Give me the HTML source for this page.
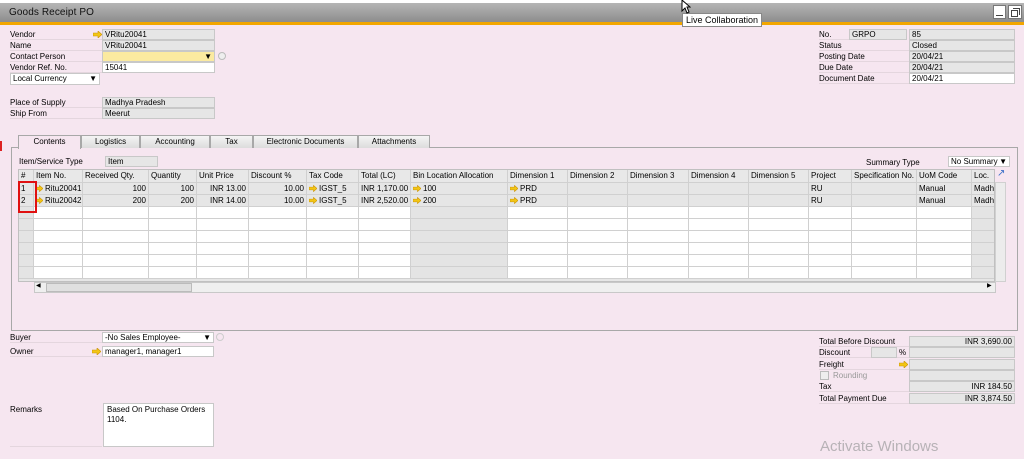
<!DOCTYPE html>
<html><head><meta charset="utf-8"><style>
*{margin:0;padding:0;box-sizing:border-box}
body{width:1024px;height:459px;overflow:hidden;background:#f6e6f0;font-family:Tahoma,"Liberation Sans",sans-serif;font-size:8px;color:#000;position:relative}
.a{position:absolute;white-space:nowrap;line-height:11px}
.lb{position:absolute;height:11px;line-height:11px;border-bottom:1px solid #e4d6de;white-space:nowrap}
.f{position:absolute;height:11px;line-height:10px;background:#e6e6e6;border:1px solid #c8c8c8;padding-left:2px;white-space:nowrap;overflow:hidden}
.w{background:#fff}
.y{background:#fbeaa0}
.arr{position:absolute;width:9px;height:7px}
.cell{position:absolute;border-right:1px solid #d0d0d0;border-bottom:1px solid #d0d0d0;overflow:hidden;white-space:nowrap;line-height:11px;padding:0 2px}
.tab{position:absolute;top:135px;height:13px;border:1px solid #a8a8a8;border-bottom:none;background:linear-gradient(#f4f4f4,#dcdcdc);text-align:center;line-height:12px}
</style></head><body>
<div style="position:absolute;left:0;top:0;width:1024px;height:3px;background:#fff"></div>
<div style="position:absolute;left:0;top:3px;width:1024px;height:19px;background:linear-gradient(#b5b5b5,#8d8d8d)"></div>
<div style="position:absolute;left:0;top:22px;width:1024px;height:3px;background:#f2a600"></div>
<div class="a" style="left:9px;top:7px;font-size:10px;color:#111;letter-spacing:0.1px">Goods Receipt PO</div>
<div style="position:absolute;left:993px;top:5px;width:13px;height:14px;background:#fff;border:1px solid #777"><div style="position:absolute;left:2px;top:9px;width:7px;height:1px;background:#444"></div></div>
<div style="position:absolute;left:1008px;top:5px;width:14px;height:14px;background:#fff;border:1px solid #777"><div style="position:absolute;left:2px;top:4px;width:7px;height:7px;border:1px solid #444"></div><div style="position:absolute;left:4px;top:2px;width:7px;height:7px;border-top:1px solid #444;border-right:1px solid #444"></div></div>
<div class="a" style="left:682px;top:13px;height:14px;background:#fff;border:1px solid #888;padding:1px 3px;font-size:9px;line-height:11px;font-family:'Liberation Sans',sans-serif">Live Collaboration</div>
<svg style="position:absolute;left:681px;top:0" width="10" height="14"><path d="M1 0 L1 11 L4 8 L6 13 L8 12 L6 7 L9 7 Z" fill="#fff" stroke="#000" stroke-width="1"/></svg>
<div style="position:absolute;left:0;top:141px;width:2px;height:10px;background:#d22"></div>

<div class="lb" style="left:10px;top:29px;width:92px">Vendor</div>
<div class="lb" style="left:10px;top:40px;width:92px">Name</div>
<div class="lb" style="left:10px;top:51px;width:92px">Contact Person</div>
<div class="lb" style="left:10px;top:62px;width:92px">Vendor Ref. No.</div>
<svg class="arr" style="left:93px;top:31px" viewBox="0 0 9 7"><path d="M0 2H5V0L9 3.5 5 7V5H0Z" fill="#f3c614" stroke="#c9930a" stroke-width=".6"/></svg>
<div class="f" style="left:102px;top:29px;width:113px">VRitu20041</div>
<div class="f" style="left:102px;top:40px;width:113px">VRitu20041</div>
<div class="f y" style="left:102px;top:51px;width:113px"><span style="position:absolute;right:2px;top:0">▼</span></div>
<div style="position:absolute;left:218px;top:52px;width:8px;height:8px;border:1px solid #bbb;border-radius:50%;background:#eee"></div>
<div class="f w" style="left:102px;top:62px;width:113px">15041</div>
<div class="f w" style="left:10px;top:73px;width:90px;height:12px">Local Currency<span style="position:absolute;right:2px;top:0">▼</span></div>
<div class="lb" style="left:10px;top:97px;width:92px">Place of Supply</div>
<div class="lb" style="left:10px;top:108px;width:92px">Ship From</div>
<div class="f" style="left:102px;top:97px;width:113px">Madhya Pradesh</div>
<div class="f" style="left:102px;top:108px;width:113px">Meerut</div>

<div class="lb" style="left:819px;top:29px;width:30px">No.</div>
<div class="f" style="left:849px;top:29px;width:58px">GRPO</div>
<div class="f" style="left:909px;top:29px;width:106px">85</div>
<div class="lb" style="left:819px;top:40px;width:90px">Status</div>
<div class="f" style="left:909px;top:40px;width:106px">Closed</div>
<div class="lb" style="left:819px;top:51px;width:90px">Posting Date</div>
<div class="f" style="left:909px;top:51px;width:106px">20/04/21</div>
<div class="lb" style="left:819px;top:62px;width:90px">Due Date</div>
<div class="f" style="left:909px;top:62px;width:106px">20/04/21</div>
<div class="lb" style="left:819px;top:73px;width:90px">Document Date</div>
<div class="f w" style="left:909px;top:73px;width:106px">20/04/21</div>

<div style="position:absolute;left:11px;top:147px;width:1007px;height:184px;border:1px solid #a8a8a8"></div>
<div class="tab" style="left:18px;width:63px;background:#f6e6f0;height:14px">Contents</div>
<div class="tab" style="left:81px;width:59px">Logistics</div>
<div class="tab" style="left:140px;width:70px">Accounting</div>
<div class="tab" style="left:210px;width:43px">Tax</div>
<div class="tab" style="left:253px;width:105px">Electronic Documents</div>
<div class="tab" style="left:358px;width:72px">Attachments</div>

<div class="lb" style="left:19px;top:156px;width:86px;border:none">Item/Service Type</div>
<div class="f" style="left:105px;top:156px;width:53px">Item</div>
<div class="a" style="left:866px;top:157px">Summary Type</div>
<div class="f w" style="left:948px;top:156px;width:62px">No Summary<span style="position:absolute;right:2px;top:0">▼</span></div>
<div class="a" style="left:997px;top:168px;color:#3a6fc8;font-size:10px">↗</div>

<div id="grid" style="position:absolute;left:18px;top:169px;width:977px;height:113px;background:#e6e6e6;border:1px solid #c0c0c0;overflow:hidden"></div>
<div style="position:absolute;left:995px;top:182px;width:11px;height:100px;background:#ececec;border:1px solid #d0d0d0"></div>
<div style="position:absolute;left:34px;top:282px;width:962px;height:11px;background:#efefef;border:1px solid #c8c8c8"></div>
<div style="position:absolute;left:46px;top:283px;width:146px;height:9px;background:#e0e0e0;border:1px solid #bbb"></div>
<div class="a" style="left:36px;top:281px;font-size:6px">◀</div>
<div class="a" style="left:987px;top:281px;font-size:6px">▶</div>
<div style="position:absolute;left:18px;top:181px;width:19px;height:32px;border:2px solid #e01010"></div>

<div class="lb" style="left:10px;top:332px;width:92px">Buyer</div>
<div class="f w" style="left:102px;top:332px;width:112px">-No Sales Employee-<span style="position:absolute;right:2px;top:0">▼</span></div>
<div style="position:absolute;left:216px;top:333px;width:8px;height:8px;border:1px solid #ccc;border-radius:50%"></div>
<div class="lb" style="left:10px;top:346px;width:92px">Owner</div>
<svg class="arr" style="left:92px;top:348px" viewBox="0 0 9 7"><path d="M0 2H5V0L9 3.5 5 7V5H0Z" fill="#f3c614" stroke="#c9930a" stroke-width=".6"/></svg>
<div class="f w" style="left:102px;top:346px;width:112px">manager1, manager1</div>
<div class="a" style="left:10px;top:404px">Remarks</div>
<div style="position:absolute;left:10px;top:446px;width:92px;height:1px;background:#e4d6de"></div>
<div class="f w" style="left:103px;top:403px;width:111px;height:44px;padding:1px 3px;white-space:normal;line-height:10px">Based On Purchase Orders 1104.</div>

<div class="lb" style="left:819px;top:336px;width:90px">Total Before Discount</div>
<div class="f" style="left:909px;top:336px;width:106px;text-align:right;padding-right:2px">INR 3,690.00</div>
<div class="lb" style="left:819px;top:347px;width:90px">Discount</div>
<div class="f" style="left:871px;top:347px;width:26px"></div>
<div class="a" style="left:899px;top:347px">%</div>
<div class="f" style="left:909px;top:347px;width:106px"></div>
<div class="lb" style="left:819px;top:359px;width:90px">Freight</div>
<svg class="arr" style="left:899px;top:361px" viewBox="0 0 9 7"><path d="M0 2H5V0L9 3.5 5 7V5H0Z" fill="#f3c614" stroke="#c9930a" stroke-width=".6"/></svg>
<div class="f" style="left:909px;top:359px;width:106px"></div>
<div style="position:absolute;left:820px;top:371px;width:9px;height:9px;border:1px solid #bbb;background:#eee"></div>
<div class="a" style="left:833px;top:370px;color:#999">Rounding</div>
<div class="f" style="left:909px;top:370px;width:106px"></div>
<div class="lb" style="left:819px;top:381px;width:90px">Tax</div>
<div class="f" style="left:909px;top:381px;width:106px;text-align:right;padding-right:2px">INR 184.50</div>
<div class="lb" style="left:819px;top:393px;width:90px">Total Payment Due</div>
<div class="f" style="left:909px;top:393px;width:106px;text-align:right;padding-right:2px">INR 3,874.50</div>
<div class="a" style="left:820px;top:438px;font-size:15px;line-height:18px;color:#b7b2b6;font-family:'Liberation Sans',sans-serif">Activate Windows</div>

<script>
var cols=[[15,"#"],[49,"Item No."],[66,"Received Qty."],[48,"Quantity"],[52,"Unit Price"],[58,"Discount %"],[52,"Tax Code"],[52,"Total (LC)"],[97,"Bin Location Allocation"],[60,"Dimension 1"],[60,"Dimension 2"],[61,"Dimension 3"],[60,"Dimension 4"],[60,"Dimension 5"],[43,"Project"],[65,"Specification No."],[55,"UoM Code"],[25,"Loc."]];
var A='<svg width="8" height="7" style="vertical-align:-1px;margin-right:2px" viewBox="0 0 9 7"><path d="M0 2H5V0L9 3.5 5 7V5H0Z" fill="#f3c614" stroke="#c9930a" stroke-width=".6"/></svg>';
var rows=[["1",A+"Ritu20041","100","100","INR 13.00","10.00",A+"IGST_5","INR 1,170.00",A+"100",A+"PRD","","","","","RU","","Manual","Madhya"],["2",A+"Ritu20042","200","200","INR 14.00","10.00",A+"IGST_5","INR 2,520.00",A+"200",A+"PRD","","","","","RU","","Manual","Madhya"]];
var right={2:1,3:1,4:1,5:1,7:1};
var h="",x=0,g=document.getElementById("grid");
for(var c=0;c<cols.length;c++){var w=cols[c][0];
h+='<div class="cell" style="left:'+x+'px;top:0;width:'+w+'px;height:13px;background:#e8e8e8;line-height:12px">'+cols[c][1]+'</div>';
for(var r=0;r<8;r++){var t=13+r*12,bg=r<2?"#e6e6e6":((c==0||c==8||c==17)?"#e4e4e4":"#fff");var tx=r<2?rows[r][c]:"";
h+='<div class="cell" style="left:'+x+'px;top:'+t+'px;width:'+w+'px;height:12px;background:'+bg+';'+(c==1?'padding:0 1px;':'')+(right[c]?'text-align:right':'')+'">'+tx+'</div>';}
x+=w;}
g.innerHTML=h;
</script>
</body></html>
